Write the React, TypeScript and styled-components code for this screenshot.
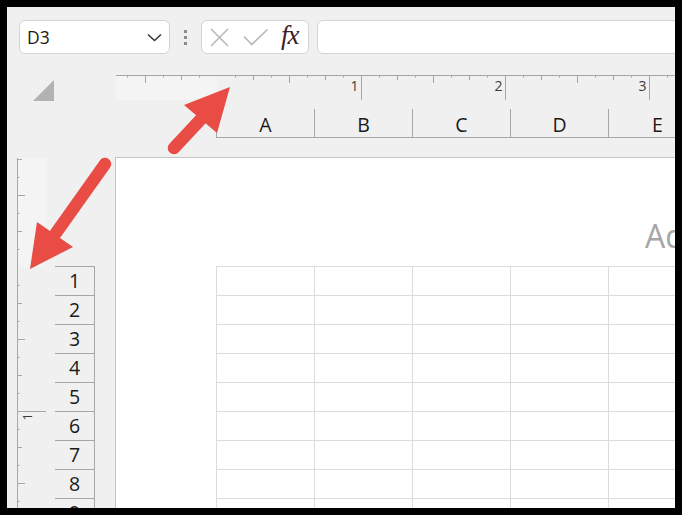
import styled, { createGlobalStyle } from "styled-components";

const GlobalStyle = createGlobalStyle`
  html, body {
    margin: 0;
    padding: 0;
    background: #000;
  }
  body {
    font-family: "Open Sans", "Noto Sans", sans-serif;
  }
`;

const Frame = styled.div`
  position: relative;
  width: 682px;
  height: 515px;
  box-sizing: border-box;
  padding: 7px;
  background: #000;
`;

const Window = styled.div`
  width: 668px;
  height: 501px;
  display: flex;
  flex-direction: column;
  overflow: hidden;
  background: #f0f0f0;
`;

const FormulaBar = styled.div`
  flex: none;
  display: flex;
  align-items: center;
  height: 34px;
  padding: 13px 0 0 12px;
`;

const Field = styled.div`
  box-sizing: border-box;
  height: 34px;
  display: flex;
  align-items: center;
  background: #fff;
  border: 1px solid #d4d4d4;
  border-radius: 6px;
`;

const NameBox = styled(Field)`
  width: 151px;
  justify-content: space-between;
  padding: 0 7px 0 7px;
  font-size: 17.5px;
  color: #1a1a1a;
`;

const Grip = styled.div`
  width: 31px;
  display: flex;
  flex-direction: column;
  align-items: center;
  gap: 3px;
  padding-top: 1px;
`;

const GripDot = styled.span`
  width: 3px;
  height: 3px;
  background: #8c8c8c;
`;

const FormulaButtons = styled(Field)`
  width: 108px;
  padding-left: 8px;
  gap: 14px;
`;

const Fx = styled.span`
  font-family: "Liberation Serif", "DejaVu Serif", serif;
  font-style: italic;
  font-size: 27px;
  line-height: 27px;
  color: #3f2020;
  margin-left: -2px;
  margin-top: -3px;
  letter-spacing: -1px;
`;

const FormulaInput = styled(Field)`
  flex: 1;
  margin-left: 8px;
  margin-right: -10px;
`;

const Body = styled.div`
  flex: 1;
  min-height: 0;
  display: flex;
  flex-direction: column;
`;

const TopBand = styled.div`
  flex: none;
  display: flex;
  height: 25px;
  margin-top: 21px;
`;

const CornerCell = styled.div`
  width: 108px;
  flex: none;
  padding: 5px 0 0 26px;
  box-sizing: border-box;
`;

const RulerStrip = styled.div`
  flex: 1;
  margin-left: 1px;
  overflow: hidden;
`;

const HeaderBand = styled.div`
  flex: none;
  display: flex;
  height: 29px;
  margin-top: 9px;
  padding-left: 209px;
`;

const ColumnHeaders = styled.div`
  display: flex;
  box-sizing: border-box;
  height: 29px;
  border-left: 1px solid #a6a6a6;
  border-bottom: 1px solid #a6a6a6;
`;

const ColumnHeader = styled.div`
  flex: none;
  box-sizing: border-box;
  width: 98px;
  height: 28px;
  padding-top: 3px;
  line-height: 25px;
  text-align: center;
  font-size: 19.5px;
  color: #1a1a1a;
  border-right: 1px solid #a6a6a6;
`;

const Workspace = styled.div`
  flex: 1;
  min-height: 0;
  display: flex;
  margin-top: 19px;
`;

const LeftGutter = styled.div`
  width: 108px;
  flex: none;
  display: flex;
  align-items: flex-start;
`;

const VRulerBox = styled.div`
  margin: 1px 0 0 10px;
  width: 29px;
  flex: none;
`;

const RowHeaders = styled.div`
  margin: 109px 0 0 9px;
  width: 40px;
  flex: none;
  box-sizing: border-box;
  border-top: 1px solid #a6a6a6;
  border-right: 1px solid #a6a6a6;
`;

const RowHeader = styled.div`
  box-sizing: border-box;
  height: 29px;
  line-height: 28px;
  text-align: center;
  font-size: 19.5px;
  color: #1a1a1a;
  border-bottom: 1px solid #a6a6a6;
`;

const Page = styled.div`
  flex: 1;
  min-width: 0;
  overflow: hidden;
  background: #fff;
  border-left: 1px solid #c4c4c4;
  border-top: 1px solid #c4c4c4;
`;

const HeaderZone = styled.div`
  height: 108px;
  box-sizing: border-box;
  padding: 62px 0 0 529px;
  white-space: nowrap;
  font-size: 32px;
  line-height: 32px;
  color: #a6a6a6;
`;

const SheetGrid = styled.div`
  margin-left: 100px;
  display: grid;
  grid-template-columns: repeat(5, 98px);
  grid-auto-rows: 29px;
  width: max-content;
  border-left: 1px solid #dcdcdc;
  border-top: 1px solid #dcdcdc;
`;

const Cell = styled.div`
  box-sizing: border-box;
  border-right: 1px solid #dcdcdc;
  border-bottom: 1px solid #dcdcdc;
`;

const Overlay = styled.svg`
  position: absolute;
  top: 0;
  left: 0;
  pointer-events: none;
`;

const columns = ["A", "B", "C", "D", "E"];
const rows = [1, 2, 3, 4, 5, 6, 7, 8, 9];

const tickLength = (k: number, full: number) => {
  const m = ((k % 8) + 8) % 8;
  if (m === 0) return full;
  if (m === 4) return 8;
  if (m % 2 === 0) return 5;
  return 2.5;
};

const HorizontalRuler = () => {
  const origin = 101.5;
  const ticks = [];
  for (let k = -6; k <= 26; k++) {
    if (k === 0) continue;
    const x = origin + 18 * k;
    ticks.push(<line key={k} x1={x} y1={0} x2={x} y2={tickLength(k, 25)} />);
  }
  return (
    <svg width="559" height="25" style={{ display: "block" }}>
      <rect x="0" y="1" width="101" height="24" fill="#f4f4f4" />
      <line x1="0" y1="0.5" x2="559" y2="0.5" stroke="#a6a6a6" />
      <g stroke="#a6a6a6" strokeWidth="1">{ticks}</g>
      {[1, 2, 3].map((n) => (
        <text
          key={n}
          x={origin + 144 * n - 3}
          y="15.5"
          textAnchor="end"
          fontSize="14"
          fontFamily="Open Sans, sans-serif"
          fill="#3a3a3a"
        >
          {n}
        </text>
      ))}
    </svg>
  );
};

const VerticalRuler = () => {
  const origin = 109.5;
  const ticks = [];
  for (let k = -6; k <= 13; k++) {
    if (k === 0) continue;
    const y = origin + 18 * k;
    ticks.push(<line key={k} x1={0} y1={y} x2={tickLength(k, 29)} y2={y} />);
  }
  return (
    <svg width="29" height="360" style={{ display: "block" }}>
      <rect x="1" y="0" width="28" height="109" fill="#f4f4f4" />
      <line x1="0.5" y1="0" x2="0.5" y2="360" stroke="#a6a6a6" />
      <g stroke="#a6a6a6" strokeWidth="1">{ticks}</g>
      <text
        transform={`translate(15, ${origin + 144 + 9}) rotate(-90)`}
        fontSize="13"
        fontFamily="Open Sans, sans-serif"
        fill="#3a3a3a"
      >
        1
      </text>
    </svg>
  );
};

const App = () => {
  return (
    <>
      <GlobalStyle />
      <Frame>
        <Window>
          <FormulaBar>
            <NameBox>
              <span>D3</span>
              <svg width="15" height="9" viewBox="0 0 15 9">
                <polyline points="1,1.5 7.5,7.5 14,1.5" fill="none" stroke="#333" strokeWidth="1.4" />
              </svg>
            </NameBox>
            <Grip>
              <GripDot />
              <GripDot />
              <GripDot />
            </Grip>
            <FormulaButtons>
              <svg width="19" height="19" viewBox="0 0 19 19">
                <path d="M1 1 L18 18 M18 1 L1 18" stroke="#b8b8b8" strokeWidth="1.6" fill="none" />
              </svg>
              <svg width="26" height="18" viewBox="0 0 26 18">
                <polyline points="1,8.5 8.7,16.5 24.5,1.5" fill="none" stroke="#b8b8b8" strokeWidth="1.6" />
              </svg>
              <Fx>fx</Fx>
            </FormulaButtons>
            <FormulaInput />
          </FormulaBar>

          <Body>
            <TopBand>
              <CornerCell>
                <svg width="21" height="21" viewBox="0 0 21 21" style={{ display: "block" }}>
                  <polygon points="21,0 21,21 0,21" fill="#b2b2b2" />
                </svg>
              </CornerCell>
              <RulerStrip>
                <HorizontalRuler />
              </RulerStrip>
            </TopBand>

            <HeaderBand>
              <ColumnHeaders>
                {columns.map((c) => (
                  <ColumnHeader key={c}>{c}</ColumnHeader>
                ))}
              </ColumnHeaders>
            </HeaderBand>

            <Workspace>
              <LeftGutter>
                <VRulerBox>
                  <VerticalRuler />
                </VRulerBox>
                <RowHeaders>
                  {rows.map((r) => (
                    <RowHeader key={r}>{r}</RowHeader>
                  ))}
                </RowHeaders>
              </LeftGutter>
              <Page>
                <HeaderZone>Add header</HeaderZone>
                <SheetGrid>
                  {rows.map((r) =>
                    columns.map((c) => <Cell key={`${c}${r}`} />)
                  )}
                </SheetGrid>
              </Page>
            </Workspace>
          </Body>
        </Window>

        <Overlay width="682" height="515" viewBox="0 0 682 515">
          <g fill="#e84c44" stroke="#e84c44">
            <line x1="174" y1="148" x2="202" y2="118" strokeWidth="12.5" strokeLinecap="round" />
            <polygon points="230,87 184,105 217,133" stroke="none" />
            <line x1="105" y1="164" x2="56" y2="233" strokeWidth="12.5" strokeLinecap="round" />
            <polygon points="30,269 37,222 73,247" stroke="none" />
          </g>
        </Overlay>
      </Frame>
    </>
  );
};

export default App;
